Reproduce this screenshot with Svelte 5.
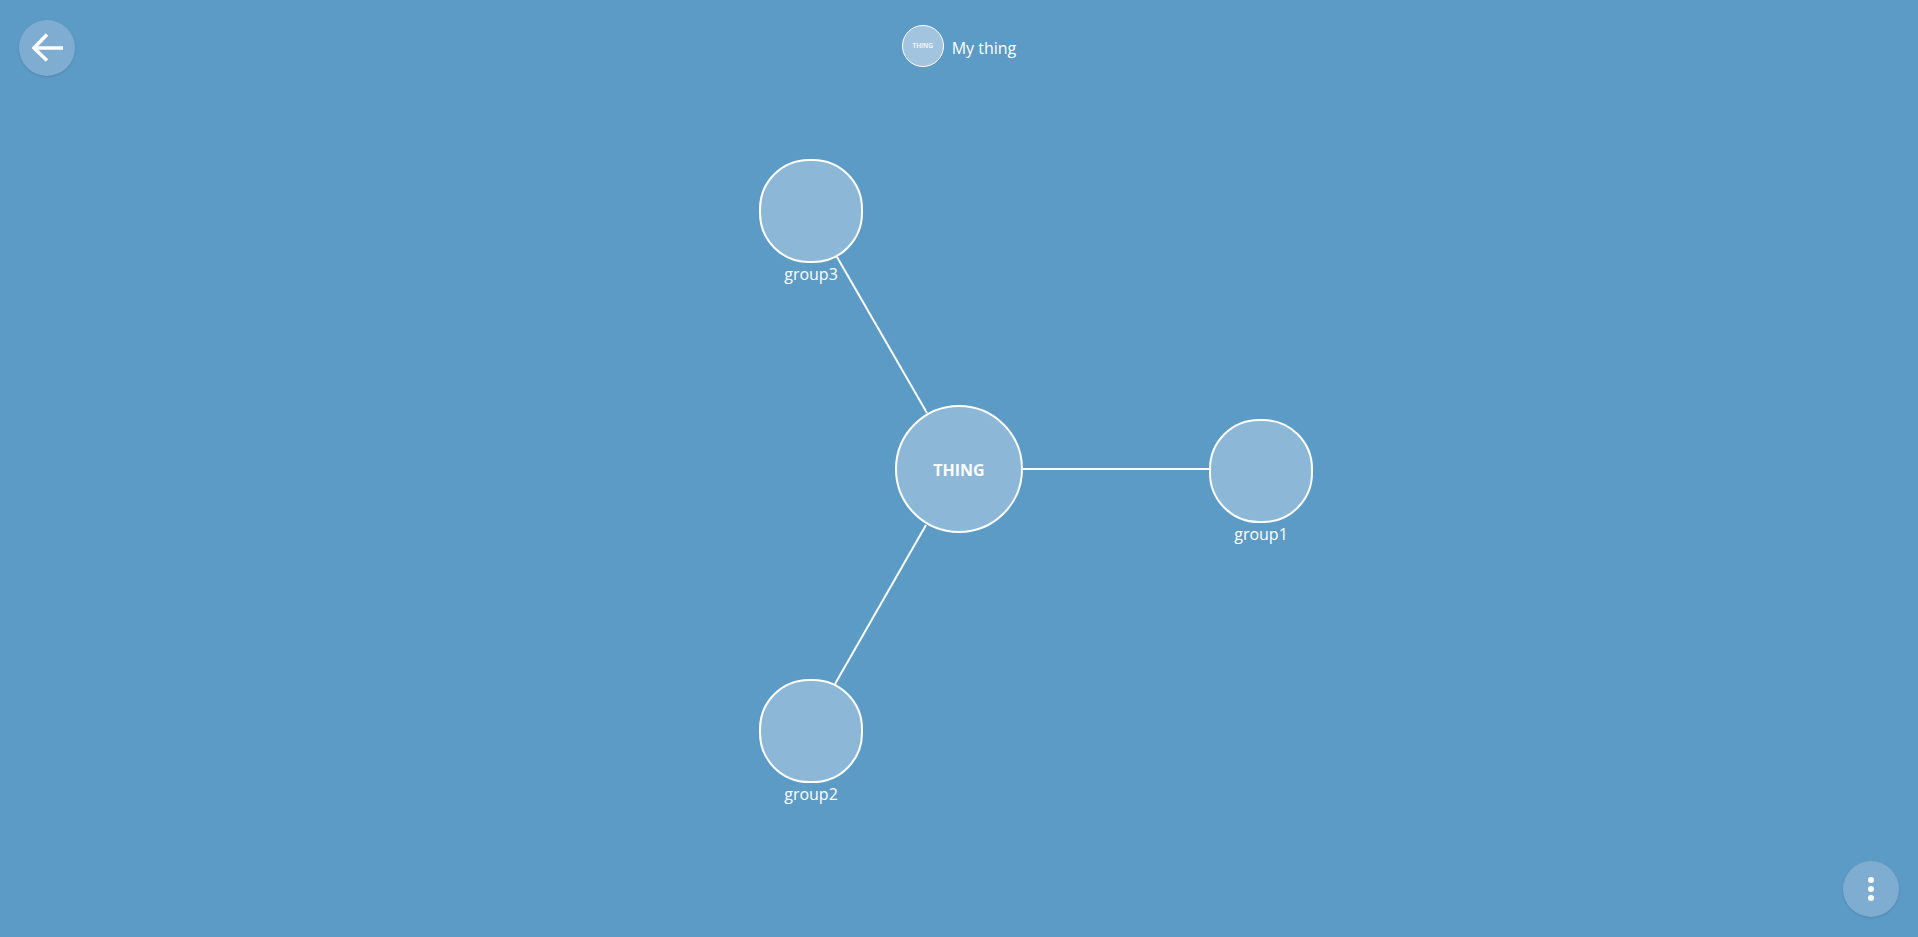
<script>
  const nodes = [
    { label: 'group1', x: 1261, y: 471 },
    { label: 'group2', x: 811, y: 731 },
    { label: 'group3', x: 811, y: 211 }
  ];
  const links = [
    [1023, 469, 1209, 469],
    [926, 525, 835, 684],
    [927, 413, 837, 257]
  ];
</script>

<div class="page">
  <header class="title">
    <span class="mini">THING</span>
    <span class="name">My thing</span>
  </header>

  <svg class="links" viewBox="0 0 1918 937" aria-hidden="true">
    {#each links as [x1, y1, x2, y2]}
      <line {x1} {y1} {x2} {y2} />
    {/each}
  </svg>

  <div class="hub">THING</div>

  {#each nodes as n}
    <div class="node" style="left: {n.x}px; top: {n.y}px;">
      <div class="blob"></div>
      <div class="label">{n.label}</div>
    </div>
  {/each}

  <button class="fab back" aria-label="Back">
    <svg viewBox="0 0 56 56" width="56" height="56">
      <path d="M15 28H44M28 14.5L15 28L28 40.5" />
    </svg>
  </button>

  <button class="fab more" aria-label="More">
    <span></span><span></span><span></span>
  </button>
</div>

<style>
  :global(body) {
    margin: 0;
    background: #5c9bc6;
  }
  .page {
    position: relative;
    width: 100vw;
    height: 100vh;
    overflow: hidden;
    background: #5c9bc6;
    color: #fff;
    font-family: "Open Sans", "Noto Sans", sans-serif;
  }
  .title {
    display: flex;
    justify-content: center;
    align-items: center;
    gap: 8px;
    padding-top: 25px;
    font-size: 16px;
  }
  .name {
    margin-top: 4px;
  }
  .mini {
    box-sizing: border-box;
    width: 42px;
    height: 42px;
    padding-bottom: 2px;
    display: flex;
    align-items: center;
    justify-content: center;
    border: 1px solid #fff;
    border-radius: 50%;
    background: #a3c4de;
    font-size: 6.5px;
    font-weight: 600;
  }
  .links {
    position: absolute;
    inset: 0;
    width: 100%;
    height: 100%;
  }
  .links line {
    stroke: #fff;
    stroke-width: 2;
  }
  .hub {
    position: absolute;
    left: 895px;
    top: 405px;
    box-sizing: border-box;
    width: 128px;
    height: 128px;
    padding-top: 2px;
    display: flex;
    align-items: center;
    justify-content: center;
    border: 2px solid #fff;
    border-radius: 50%;
    background: #8cb7d7;
    font-size: 16px;
    font-weight: 700;
  }
  .node {
    position: absolute;
    width: 104px;
    margin: -52px 0 0 -52px;
    text-align: center;
    font-size: 16px;
  }
  .blob {
    box-sizing: border-box;
    width: 104px;
    height: 104px;
    border: 2px solid #fff;
    border-radius: 48%;
    background: #8cb7d7;
  }
  .label {
    line-height: 22px;
  }
  .fab {
    position: absolute;
    width: 56px;
    height: 56px;
    padding: 0;
    border: 0;
    border-radius: 50%;
    background: #7fadd1;
    box-shadow: 0 1px 2px rgba(40, 80, 120, 0.25);
  }
  .back {
    left: 19px;
    top: 20px;
  }
  .back svg {
    display: block;
  }
  .back path {
    fill: none;
    stroke: #fff;
    stroke-width: 3.5;
  }
  .more {
    right: 19px;
    bottom: 20px;
    display: flex;
    flex-direction: column;
    align-items: center;
    justify-content: center;
    gap: 3px;
  }
  .more span {
    width: 6px;
    height: 6px;
    border-radius: 50%;
    background: #fff;
  }
</style>
